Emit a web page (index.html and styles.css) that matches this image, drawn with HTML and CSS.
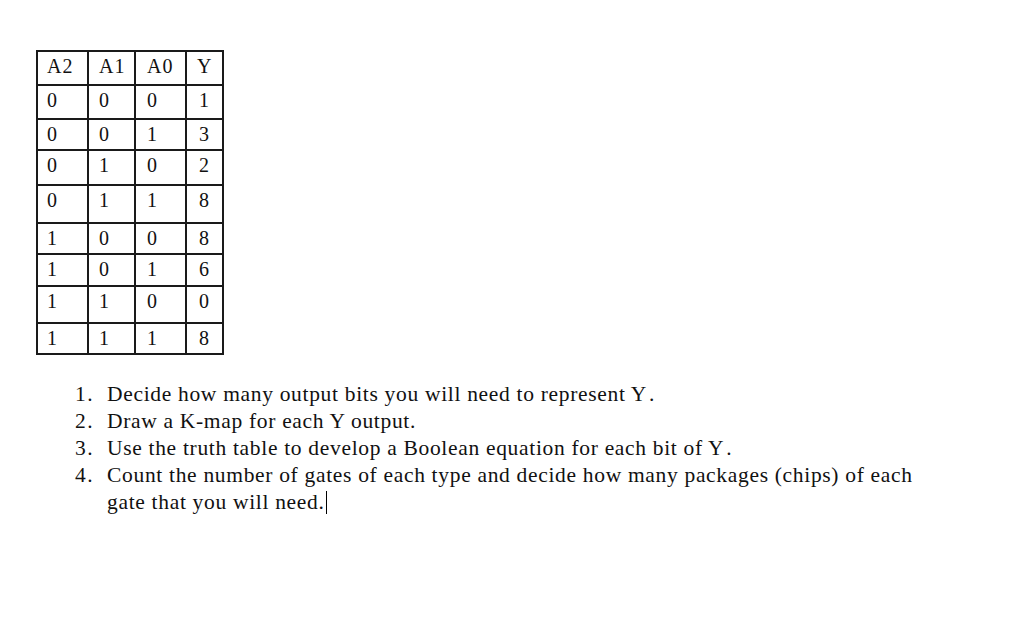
FILE: index.html
```html
<!DOCTYPE html>
<html>
<head>
<meta charset="utf-8">
<link rel="stylesheet" href="styles.css">
</head>
<body>
<div class="page">
  <table class="truth">
    <tr class="head"><td class="c1">A2</td><td class="c2">A1</td><td class="c3">A0</td><td class="c4">Y</td></tr>
    <tr class="r34"><td>0</td><td>0</td><td>0</td><td>1</td></tr>
    <tr class="r31"><td>0</td><td>0</td><td>1</td><td>3</td></tr>
    <tr class="r35"><td>0</td><td>1</td><td>0</td><td>2</td></tr>
    <tr class="r38"><td>0</td><td>1</td><td>1</td><td>8</td></tr>
    <tr class="r31"><td>1</td><td>0</td><td>0</td><td>8</td></tr>
    <tr class="r32"><td>1</td><td>0</td><td>1</td><td>6</td></tr>
    <tr class="r37"><td>1</td><td>1</td><td>0</td><td>0</td></tr>
    <tr class="r31"><td>1</td><td>1</td><td>1</td><td>8</td></tr>
  </table>
  <ol class="steps">
    <li><span class="num">1.</span><span class="txt">Decide how many output bits you will need to represent Y<span class="dot">.</span></span></li>
    <li><span class="num">2.</span><span class="txt">Draw a K-map for each Y output.</span></li>
    <li><span class="num">3.</span><span class="txt">Use the truth table to develop a Boolean equation for each bit of Y<span class="dot">.</span></span></li>
    <li><span class="num">4.</span><span class="txt">Count the number of gates of each type and decide how many packages (chips) of each gate that you will need.<span class="caret"></span></span></li>
  </ol>
</div>
</body>
</html>
```
FILE: styles.css
```css
html, body {
  margin: 0;
  padding: 0;
  background: #fff;
}
body {
  font-family: "Liberation Serif", "Times New Roman", serif;
  color: #111;
}
.page {
  padding: 50px 0 0 36px;
}
.truth {
  border-collapse: collapse;
  font-size: 20px;
  letter-spacing: 1px;
}
.truth td {
  border: 2px solid #1a1a1a;
  vertical-align: top;
  padding: 4px 0 0 9px;
  line-height: 20px;
  box-sizing: border-box;
}
.truth td:nth-child(1) { width: 51px; }
.truth td:nth-child(2) { width: 47px; padding-left: 10px; }
.truth td:nth-child(3) { width: 51px; padding-left: 11px; }
.truth td:nth-child(4) { width: 37px; padding-left: 12px; }
.truth .head td { height: 34px; }
.truth .head td.c4 { padding-left: 10px; }
.r31 td { height: 31px; }
.r32 td { height: 32px; }
.r34 td { height: 34px; }
.r35 td { height: 35px; }
.r37 td { height: 37px; }
.r38 td { height: 38px; }

.steps {
  list-style: none;
  margin: 26px 0 0 0;
  padding: 0 0 0 39px;
  width: 850px;
  font-size: 21.5px;
  line-height: 27px;
  letter-spacing: 0.68px;
}
.steps li {
  display: flex;
}
.num {
  flex: 0 0 32px;
  letter-spacing: 1.5px;
}
.txt {
  flex: 1;
}
.dot {
  margin-left: 2px;
}
.caret {
  display: inline-block;
  width: 1px;
  height: 23px;
  background: #000;
  vertical-align: -5px;
  margin-left: 1px;
}
```
